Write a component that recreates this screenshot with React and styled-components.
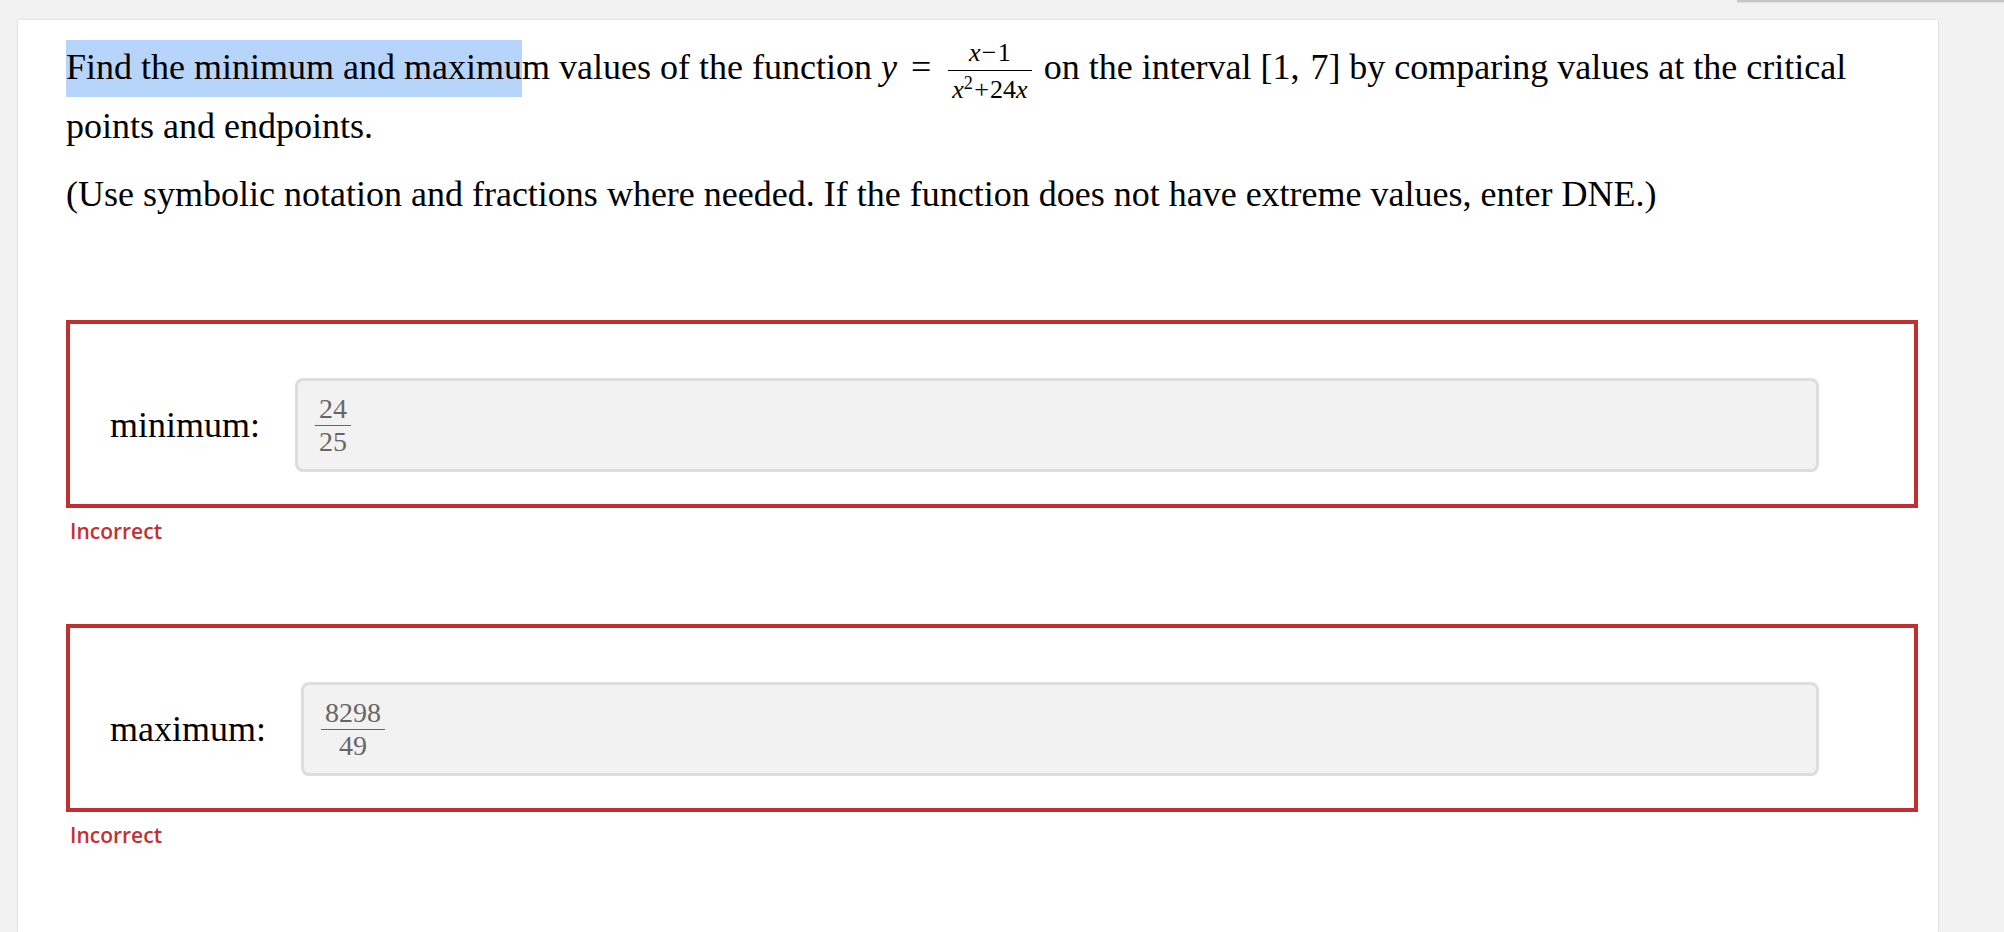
import styled, { createGlobalStyle } from "styled-components";

const GlobalStyle = createGlobalStyle`
  html, body {
    margin: 0;
    padding: 0;
    background: #f2f2f2;
    font-family: "Liberation Serif", "Times New Roman", serif;
  }
`;

const Page = styled.div`
  min-height: 100vh;
  display: flex;
  flex-direction: column;
`;

const TopStrip = styled.div`
  display: flex;
  justify-content: flex-end;
  height: 3px;
`;

const TopStripBar = styled.div`
  width: 267px;
  height: 2px;
  background: #c6c6c6;
  box-shadow: 0 1px 1px rgba(0, 0, 0, 0.08);
`;

const Card = styled.main`
  flex: 1;
  box-sizing: border-box;
  width: 1920px;
  margin: 17px 0 0 18px;
  padding: 20px 20px 40px 48px;
  background: #ffffff;
  box-shadow: 0 0 2px rgba(0, 0, 0, 0.18);
`;

const Prompt = styled.p`
  margin: 0;
  font-size: 36px;
  line-height: 46px;
  color: #000;
`;

const Note = styled(Prompt)`
  margin-top: 22px;
`;

const Selected = styled.span`
  background: #b7d5fb;
  padding: 7px 0 10px;
`;

const Var = styled.i`
  font-style: italic;
`;

const Op = styled.span`
  margin: 0 ${(p) => p.$space || "0.05em"};
`;

const Eq = styled.span`
  margin: 0 5px;
`;

const Comma = styled.span`
  margin-right: 0.3em;
`;

/* stacked fraction: numerator, rule, denominator */
const Frac = styled.span`
  display: inline-flex;
  flex-direction: column;
  align-items: center;
  vertical-align: ${(p) => p.$raise || "0px"};
  margin: 0 ${(p) => p.$gap || "0px"};
  font-size: ${(p) => p.$size};
  color: ${(p) => p.$color || "inherit"};
`;

const FracNum = styled.span`
  align-self: stretch;
  text-align: center;
  line-height: 1em;
  padding: 0 ${(p) => p.$pad || "4px"} ${(p) => p.$below || "4px"};
  border-bottom: 1.5px solid currentColor;
`;

const FracDen = styled.span`
  text-align: center;
  line-height: 1em;
  padding: ${(p) => p.$above || "0px"} ${(p) => p.$pad || "4px"} 0;
`;

const Sup = styled.sup`
  font-size: 0.7em;
  line-height: 0;
  vertical-align: 0.5em;
`;

const AnswerList = styled.div`
  margin-top: 103px;
  display: flex;
  flex-direction: column;
  gap: 79px;
`;

const AnswerBlock = styled.section`
  display: flex;
  flex-direction: column;
`;

const AnswerBox = styled.div`
  display: flex;
  align-items: center;
  gap: 35px;
  border: 4px solid #c12f2f;
  padding: 54px 95px 32px 40px;
`;

const Label = styled.span`
  flex-shrink: 0;
  font-size: 36px;
  line-height: 46px;
  color: #000;
`;

const Field = styled.div`
  flex: 1;
  box-sizing: border-box;
  height: 94px;
  display: flex;
  align-items: center;
  padding: 0 17px;
  background: #f2f2f2;
  border: 3px solid #dddddd;
  border-radius: 8px;
`;

const Feedback = styled.div`
  margin-top: 9px;
  padding-left: 4px;
  font-family: "Open Sans", "Noto Sans", sans-serif;
  font-weight: 600;
  font-size: 21px;
  color: #c4302f;
`;

const answers = [
  { label: "minimum:", num: "24", den: "25" },
  { label: "maximum:", num: "8298", den: "49" },
];

export default function App() {
  return (
    <>
      <GlobalStyle />
      <Page>
        <TopStrip>
          <TopStripBar />
        </TopStrip>
        <Card>
          <Prompt>
            <Selected>Find the minimum and maximu</Selected>m values of the
            function <Var>y</Var> <Eq>=</Eq>{" "}
            <Frac $size="26px" $raise="18px" $gap="3px">
              <FracNum $pad="4px" $below="4px">
                <Var>x</Var>
                <Op>−</Op>1
              </FracNum>
              <FracDen $pad="4px" $above="6px">
                <Var>x</Var>
                <Sup>2</Sup>
                <Op>+</Op>24<Var>x</Var>
              </FracDen>
            </Frac>{" "}
            on the interval [1<Comma>,</Comma>7] by comparing values at the
            critical points and endpoints.
          </Prompt>
          <Note>
            (Use symbolic notation and fractions where needed. If the function
            does not have extreme values, enter DNE.)
          </Note>

          <AnswerList>
            {answers.map((a) => (
              <AnswerBlock key={a.label}>
                <AnswerBox>
                  <Label>{a.label}</Label>
                  <Field>
                    <Frac $size="28px" $color="#666666">
                      <FracNum $below="2px">{a.num}</FracNum>
                      <FracDen $above="2px">{a.den}</FracDen>
                    </Frac>
                  </Field>
                </AnswerBox>
                <Feedback>Incorrect</Feedback>
              </AnswerBlock>
            ))}
          </AnswerList>
        </Card>
      </Page>
    </>
  );
}
